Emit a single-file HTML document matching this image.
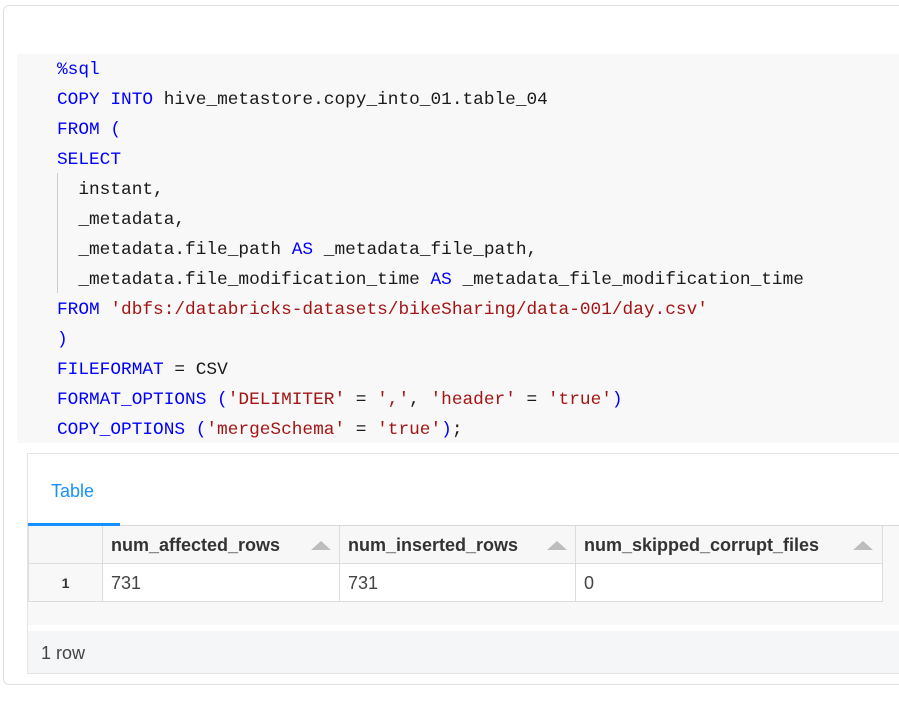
<!DOCTYPE html>
<html><head><style>
*{box-sizing:border-box;margin:0;padding:0}
body{width:899px;height:706px;background:#fff;position:relative;overflow:hidden;font-family:"Liberation Sans",sans-serif}
.card{position:absolute;left:3px;top:5px;width:910px;height:680px;border:1px solid #e0e0e0;border-radius:6px}
.code{position:absolute;left:17px;top:54px;width:882px;height:389px;background:#f8f8f8}
.ln{position:absolute;left:57px;font-family:"Liberation Mono",monospace;font-size:17.8px;white-space:pre;color:#1a1a1a;line-height:30px}
.k{color:#0000ff}.s{color:#a31515}
.bar{position:absolute;left:57px;top:173px;width:1px;height:120px;background:#ccc}
.panel{position:absolute;left:27px;top:453px;width:890px;height:221px;border:1px solid #e4e4e4;background:#fff}
.tab{position:absolute;left:51px;top:481px;font-size:18px;color:#1890ff}
.tabl{position:absolute;left:28px;top:523px;width:92px;height:3px;background:#1890ff}
.hdrline{position:absolute;left:28px;top:525px;width:871px;height:1px;background:#d9d9d9}
.c{position:absolute;border-right:1px solid #dcdcdc;border-bottom:1px solid #dcdcdc;font-size:18px;line-height:38px;padding-left:8px;color:#444}
.h{font-weight:bold;color:#333;background:#f7f7f7}
.tri{position:absolute;top:15px;width:0;height:0;border-left:10px solid transparent;border-right:10px solid transparent;border-bottom:9px solid #bdbdbd}
</style></head><body>
<div class="card"></div>
<div class="code"></div>
<div class="bar"></div>
<div class="ln" style="top:55px"><span class="k">%sql</span></div>
<div class="ln" style="top:85px"><span class="k">COPY INTO</span> hive_metastore.copy_into_01.table_04</div>
<div class="ln" style="top:115px"><span class="k">FROM (</span></div>
<div class="ln" style="top:145px"><span class="k">SELECT</span></div>
<div class="ln" style="top:175px">  instant,</div>
<div class="ln" style="top:205px">  _metadata,</div>
<div class="ln" style="top:235px">  _metadata.file_path <span class="k">AS</span> _metadata_file_path,</div>
<div class="ln" style="top:265px">  _metadata.file_modification_time <span class="k">AS</span> _metadata_file_modification_time</div>
<div class="ln" style="top:295px"><span class="k">FROM</span> <span class="s">'dbfs:/databricks-datasets/bikeSharing/data-001/day.csv'</span></div>
<div class="ln" style="top:325px"><span class="k">)</span></div>
<div class="ln" style="top:355px"><span class="k">FILEFORMAT</span> = CSV</div>
<div class="ln" style="top:385px"><span class="k">FORMAT_OPTIONS (</span><span class="s">'DELIMITER'</span> = <span class="s">','</span>, <span class="s">'header'</span> = <span class="s">'true'</span><span class="k">)</span></div>
<div class="ln" style="top:415px"><span class="k">COPY_OPTIONS (</span><span class="s">'mergeSchema'</span> = <span class="s">'true'</span><span class="k">)</span>;</div>
<div class="panel"></div>
<div class="tab">Table</div>
<div style="position:absolute;left:28px;top:526px;width:871px;height:99px;background:#f8f8f8"></div>
<div class="hdrline"></div>
<div class="tabl"></div>
<div class="c h" style="left:28px;top:526px;width:75px;height:38px;border-left:1px solid #dcdcdc"></div>
<div class="c h" style="left:103px;top:526px;width:237px;height:38px">num_affected_rows<div class="tri" style="left:208px"></div></div>
<div class="c h" style="left:340px;top:526px;width:236px;height:38px">num_inserted_rows<div class="tri" style="left:207px"></div></div>
<div class="c h" style="left:576px;top:526px;width:307px;height:38px">num_skipped_corrupt_files<div class="tri" style="left:277px"></div></div>
<div class="c" style="left:28px;top:564px;width:75px;height:38px;border-left:1px solid #dcdcdc;background:#f8f8f8;font-size:14px;font-weight:bold;color:#333;text-align:center;padding:0">1</div>
<div class="c" style="left:103px;top:564px;width:237px;height:38px;background:#fff">731</div>
<div class="c" style="left:340px;top:564px;width:236px;height:38px;background:#fff">731</div>
<div class="c" style="left:576px;top:564px;width:307px;height:38px;background:#fff">0</div>
<div style="position:absolute;left:28px;top:631px;width:871px;height:42px;background:#f5f6f8;font-size:18px;color:#444;padding:12px 0 0 13px">1 row</div>
</body></html>
